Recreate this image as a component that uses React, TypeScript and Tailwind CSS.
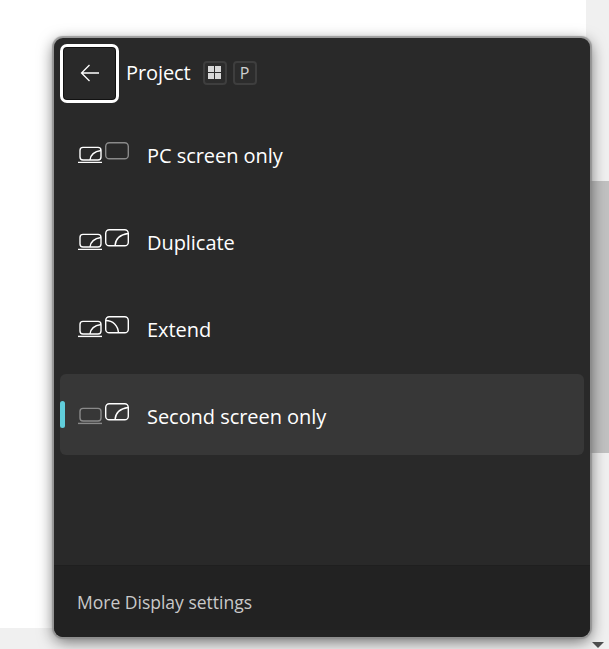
const font = { fontFamily: '"Open Sans", sans-serif' };

function Laptop({ dim, glyph = true }: { dim?: boolean; glyph?: boolean }) {
  const c = dim ? "#8a8a8a" : "#ffffff";
  return (
    <svg width="24" height="20" viewBox="0 0 24 20" fill="none" stroke={c} strokeWidth="1.4" className="block">
      <rect x="2" y="1.4" width="21" height="12.600" rx="3" />
      {glyph && <path d="M12 14C12.500 9 16 5.500 23 4.500" />}
      <path d="M0 16.400h24" />
    </svg>
  );
}

function Screen({ mode }: { mode: "empty" | "dup" | "ext" }) {
  const c = mode === "empty" ? "#8a8a8a" : "#ffffff";
  return (
    <svg width="24" height="20" viewBox="0 0 24 20" fill="none" stroke={c} strokeWidth="1.4" className="block">
      <rect x="0.700" y="1.800" width="22.600" height="16" rx="3.600" />
      {mode === "dup" && <path d="M10 17.800C10.500 11 15 6.500 23.300 5.500" />}
      {mode === "ext" && <path d="M0.700 5.500C8 5.500 13 10.500 13.500 17.800" />}
    </svg>
  );
}

function Row({ label, mode, dimLaptop, active }: { label: string; mode: "empty" | "dup" | "ext"; dimLaptop?: boolean; active?: boolean }) {
  return (
    <div className={`relative flex h-[81px] items-center rounded-[6px] ${active ? "bg-[#373737]" : ""}`}>
      {active && <div className="absolute left-0 top-[27px] h-[27px] w-[5px] rounded-full bg-[#60cdda]" />}
      <div className="ml-[18px] flex h-[25px] w-[69px] items-start">
        <div className="mt-[5px]"><Laptop dim={dimLaptop} glyph={!dimLaptop} /></div>
        <div className="ml-[3px]"><Screen mode={mode} /></div>
      </div>
      <span className="mt-[5px] text-[20px] tracking-[-0.05px] leading-[28px] text-white">{label}</span>
    </div>
  );
}

function Key({ children }: { children: React.ReactNode }) {
  return (
    <div className="flex h-[24px] w-[24px] items-center justify-center rounded-[4px] border-[2px] border-[#3e3e3e] bg-[#2c2c2c] text-[16px] leading-none text-[#cfcfcf]">
      {children}
    </div>
  );
}

export default function App() {
  return (
    <div className="relative h-[649px] w-[609px] overflow-hidden bg-white" style={font}>
      <div className="absolute bottom-0 left-0 h-[21px] w-full bg-[#f0f0f0]" />
      <div className="absolute right-0 top-0 flex h-full w-[23px] flex-col bg-[#f0f0f0]">
        <div className="mt-[181px] h-[272px] w-full bg-[#c1c1c1]" />
        <svg width="12" height="6" viewBox="0 0 12 6" className="absolute bottom-[1px] left-[6px]"><path d="M0 0h12L6 6z" fill="#505050" /></svg>
      </div>
      <div className="absolute left-[54px] top-[38px] flex h-[599px] w-[536px] flex-col overflow-hidden rounded-[9px] bg-[#292929] shadow-[0_0_1px_2px_rgba(140,140,140,0.8),0_4px_16px_rgba(0,0,0,0.6)]">
        <div className="flex-1 px-[6px] pt-[6px]">
          <div className="flex items-center">
            <div className="flex h-[59px] w-[59px] items-center justify-center rounded-[7px] border-[3px] border-white shadow-[inset_0_0_0_1px_#111]">
              <svg width="20" height="18" viewBox="0 0 20 18" fill="none" stroke="#ffffff" strokeWidth="1.300" className="-mt-[2px]">
                <path d="M19 9H1.500M9.500 1 1.500 9l8 8" />
              </svg>
            </div>
            <span className="ml-[7px] -mt-[1px] text-[20px] tracking-[-0.1px] leading-[28px] text-white">Project</span>
            <div className="ml-[12px] -mt-[2px] flex gap-[6px]">
              <Key>
                <div className="grid grid-cols-2 gap-[1px]">
                  <span className="h-[6px] w-[6px] bg-[#d8d8d8]" />
                  <span className="h-[6px] w-[6px] bg-[#d8d8d8]" />
                  <span className="h-[6px] w-[6px] bg-[#d8d8d8]" />
                  <span className="h-[6px] w-[6px] bg-[#d8d8d8]" />
                </div>
              </Key>
              <Key>P</Key>
            </div>
          </div>
          <div className="mt-[10px] flex flex-col gap-[6px]">
            <Row label="PC screen only" mode="empty" />
            <Row label="Duplicate" mode="dup" />
            <Row label="Extend" mode="ext" />
            <Row label="Second screen only" mode="dup" dimLaptop active />
          </div>
        </div>
        <div className="flex h-[72px] items-center border-t border-[#1f1f1f] bg-[#222222] pl-[23px]">
          <span className="text-[17.500px] leading-[24px] text-[#c9c9c9]">More Display settings</span>
        </div>
      </div>
    </div>
  );
}
